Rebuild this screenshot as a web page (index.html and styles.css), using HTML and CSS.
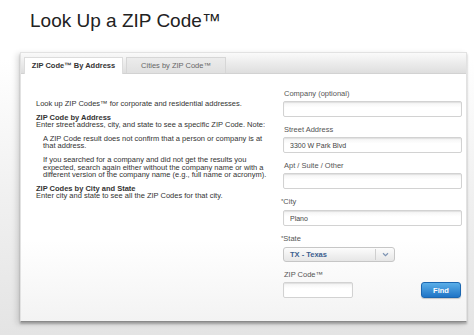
FILE: index.html
```html
<!DOCTYPE html>
<html lang="en">
<head>
  <meta charset="UTF-8" />
  <title>Look Up a ZIP Code</title>
  <link rel="stylesheet" href="styles.css">
</head>
<body>

  <h1 class="page-title">Look Up a ZIP Code&trade;</h1>

  <!-- Lookup panel -->
  <div class="panel">
    <div class="tabs">
      <div class="tab active">ZIP Code&trade; By Address</div>
      <div class="tab">Cities by ZIP Code&trade;</div>
    </div>

    <div class="panel-body">
      <div class="info">
        <p>Look up ZIP Codes&trade; for corporate and residential addresses.</p>
        <h3>ZIP Code by Address</h3>
        <p>Enter street address, city, and state to see a specific ZIP Code. Note:</p>
        <p class="note">A ZIP Code result does not confirm that a person or company is at<br>that address.</p>
        <p class="note">If you searched for a company and did not get the results you<br>expected, search again either without the company name or with a<br>different version of the company name (e.g., full name or acronym).</p>
        <h3>ZIP Codes by City and State</h3>
        <p>Enter city and state to see all the ZIP Codes for that city.</p>
      </div>

      <form class="lookup-form" onsubmit="return false;">
        <div class="field">
          <label>Company (optional)</label>
          <input type="text">
        </div>
        <div class="field">
          <label>Street Address</label>
          <input type="text" value="3300 W Park Blvd">
        </div>
        <div class="field">
          <label>Apt / Suite / Other</label>
          <input type="text">
        </div>
        <div class="field">
          <label><span class="req">*</span>City</label>
          <input type="text" value="Plano">
        </div>
        <div class="field">
          <label><span class="req">*</span>State</label>
          <div class="select">
            <span class="select-value">TX - Texas</span>
            <span class="select-arrow">
              <svg width="7" height="5" viewBox="0 0 7 5"><path d="M1 1.2 L3.5 3.6 L6 1.2" fill="none" stroke="#7d93b3" stroke-width="1.2"/></svg>
            </span>
          </div>
        </div>
        <div class="field">
          <label>ZIP Code&trade;</label>
          <div class="zip-row">
            <input type="text" class="zip-input">
            <button class="find-btn">Find</button>
          </div>
        </div>
      </form>
    </div>
  </div>

</body>
</html>
```

FILE: styles.css
```css
* {
  box-sizing: border-box;
  margin: 0;
  padding: 0;
}

body {
  font-family: 'Liberation Sans', Arial, sans-serif;
  background: linear-gradient(to bottom, #fff 0, #fff 60px, #f0f0f0 200px, #e4e4e4 100%);
  color: #333;
  width: 474px;
  height: 335px;
  overflow: hidden;
}

.page-title {
  font-size: 19px;
  font-weight: normal;
  line-height: 26px;
  color: #222;
  padding: 8px 0 0 30px;
  height: 52px;
}

.panel {
  margin-left: 20px;
  width: 447px;
  height: 270px;
  background: linear-gradient(to bottom, #fff 0, #fff 70%, #f3f3f3 100%);
  border: 1px solid #e2e2e2;
  border-bottom: 1px solid #8a8a8a;
  box-shadow: -3px 2px 6px rgba(0, 0, 0, 0.14), 0 2px 2px rgba(0, 0, 0, 0.25);
}

.tabs {
  height: 21px;
  display: flex;
  align-items: flex-end;
  gap: 3px;
  padding-left: 3px;
  background: linear-gradient(to bottom, #fafafa, #dedede);
  border-bottom: 1px solid #d2d2d2;
}

.tab {
  width: 100px;
  height: 16px;
  font-size: 7.5px;
  line-height: 16px;
  text-align: center;
  color: #666;
  background: linear-gradient(to bottom, #ececec, #e0e0e0);
  border: 1px solid #d6d6d6;
  border-bottom: none;
}

.tab.active {
  width: 99px;
  height: 17px;
  margin-bottom: -1px;
  font-weight: bold;
  color: #333;
  background: #fff;
  border-color: #dcdcdc;
}

.panel-body {
  display: flex;
  justify-content: space-between;
  padding: 15px 4px 0 15px;
}

.info {
  width: 236px;
  margin-top: 11px;
  font-size: 7.5px;
  line-height: 7.6px;
  color: #333;
}

.info p {
  margin-bottom: 6px;
}

.info h3 {
  font-size: 7.5px;
  font-weight: bold;
  line-height: 7.6px;
  margin-top: 3px;
}

.info .note {
  padding-left: 7px;
  white-space: nowrap;
}

.lookup-form {
  width: 179px;
}

.field {
  margin-bottom: 8px;
}

.field label {
  display: block;
  font-size: 7.5px;
  line-height: 9px;
  color: #555;
  margin-bottom: 3px;
  padding-left: 1px;
}

.req {
  position: relative;
  top: -1px;
  margin-left: -3px;
  font-size: 6px;
}

.field input {
  display: block;
  width: 100%;
  height: 16px;
  padding: 0 6px;
  font-family: 'Liberation Sans', Arial, sans-serif;
  font-size: 7px;
  color: #444;
  background: linear-gradient(to bottom, #f3f3f3, #fff 40%);
  border: 1px solid #d2d2d2;
  border-radius: 2px;
  box-shadow: inset 0 1px 1px rgba(0, 0, 0, 0.08);
}

.select {
  width: 112px;
  height: 15px;
  display: flex;
  align-items: center;
  background: linear-gradient(to bottom, #fcfcfc, #e6e6e6);
  border: 1px solid #c6c6c6;
  border-radius: 3px;
}

.select-value {
  flex: 1;
  padding-left: 6px;
  font-size: 7.5px;
  font-weight: bold;
  color: #3d5f8f;
}

.select-arrow {
  width: 19px;
  height: 11px;
  display: flex;
  align-items: center;
  justify-content: center;
  border-left: 1px solid #cfcfcf;
}

.zip-row {
  display: flex;
  justify-content: space-between;
  align-items: center;
}

.field .zip-input {
  width: 70px;
}

.find-btn {
  width: 40px;
  height: 16px;
  margin-right: 1px;
  font-family: 'Liberation Sans', Arial, sans-serif;
  font-size: 7.5px;
  font-weight: bold;
  color: #fff;
  background: linear-gradient(to bottom, #5aaee8, #1f74c6);
  border: 1px solid #1b66b0;
  border-radius: 3px;
  box-shadow: 0 1px 1px rgba(0, 0, 0, 0.2);
  cursor: pointer;
}
```
